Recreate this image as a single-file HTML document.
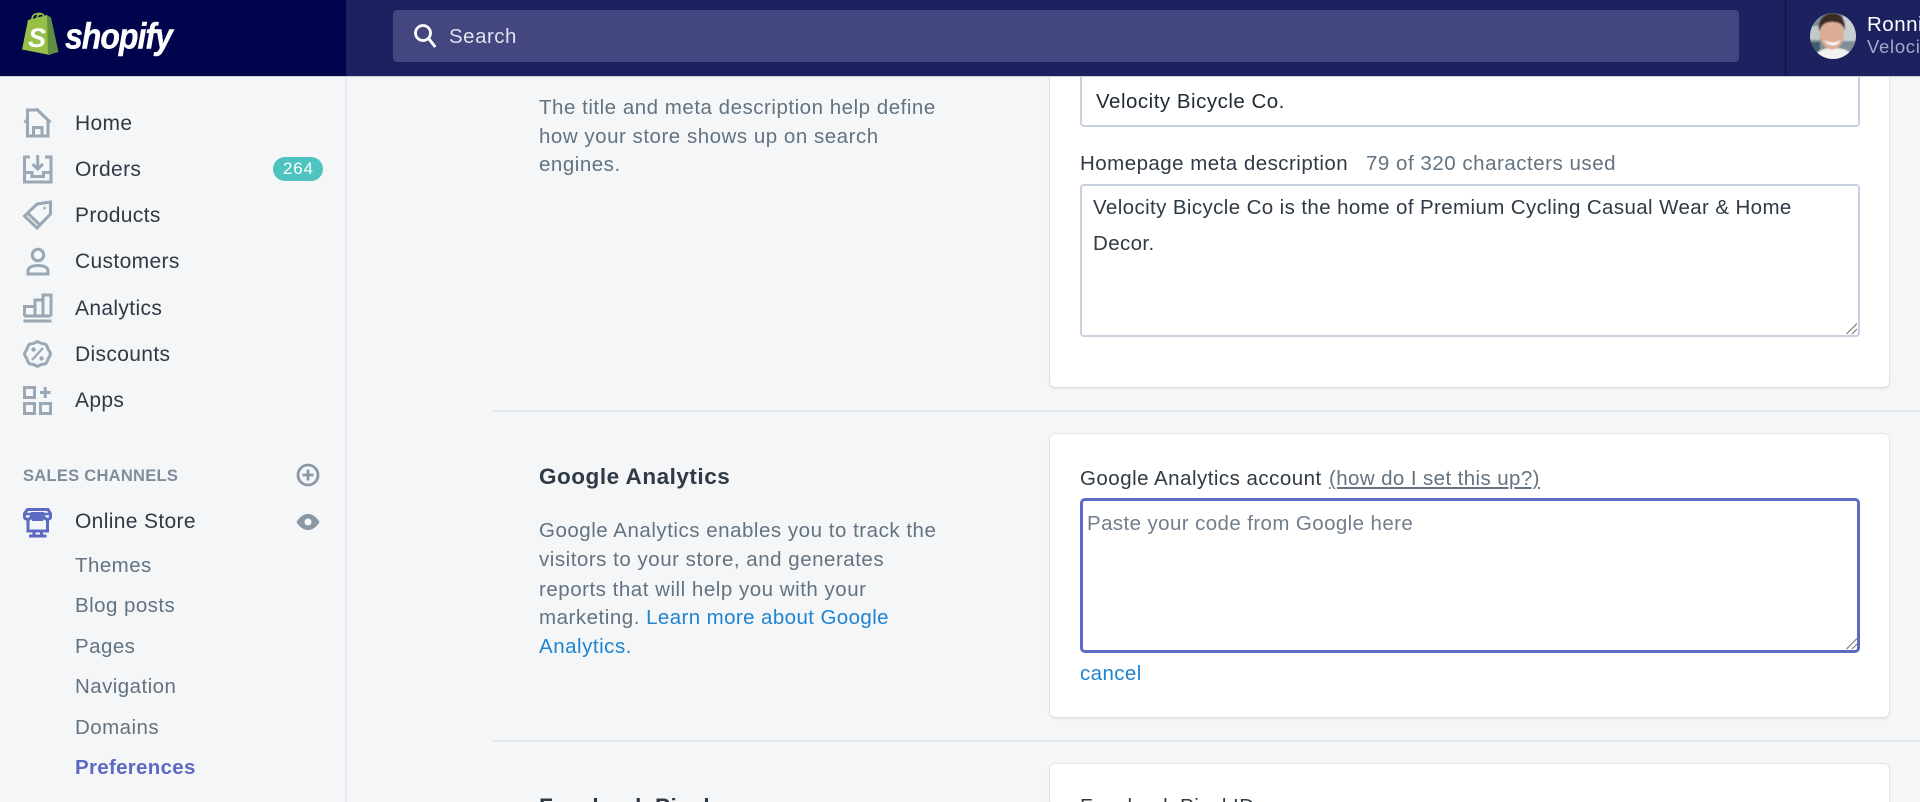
<!DOCTYPE html>
<html lang="en">
<head>
<meta charset="utf-8">
<title>Shopify Preferences</title>
<style>
html,body{margin:0;padding:0;width:1920px;height:802px;overflow:hidden;background:#f4f6f8}
body{font-family:"Liberation Sans",sans-serif;font-size:20.5px;color:#212b36;-webkit-font-smoothing:antialiased}
#p{position:relative;width:1920px;height:802px;overflow:hidden;background:#f4f6f8}
.a{position:absolute;white-space:nowrap;line-height:28px;margin-top:-13px}
.box{position:absolute;box-sizing:border-box}
.nav{left:75px;font-size:21px;color:#2f3a45;letter-spacing:.35px}
.sub{left:75px;color:#637381;letter-spacing:.45px}
.g{left:539px;color:#637381;letter-spacing:.52px}
.h{left:539px;font-size:22.5px;font-weight:700;color:#2f3a45;letter-spacing:.52px}
.card{background:#fff;left:1050px;width:839px;border-radius:5px;box-shadow:0 0 0 1px rgba(63,63,68,.05),0 1px 3px rgba(63,63,68,.15)}
.field{left:1080px;width:780px;background:#fff;border:2px solid #c8d1e0;border-radius:4px}
a{color:#1f84d0;text-decoration:none}
svg{position:absolute;left:0;top:0}
#top{position:absolute;left:0;top:0;width:1920px;height:77px;background:#1c2260;border-bottom:1px solid #c9cbdc;box-sizing:border-box;overflow:hidden}
</style>
</head>
<body>
<div id="p">
<div class="box" style="left:345px;top:77px;width:2px;height:725px;background:#e8ebef"></div>

<div class="a nav" style="top:123px">Home</div>
<div class="a nav" style="top:169px">Orders</div>
<div class="a nav" style="top:215px">Products</div>
<div class="a nav" style="top:261px">Customers</div>
<div class="a nav" style="top:308px">Analytics</div>
<div class="a nav" style="top:354px">Discounts</div>
<div class="a nav" style="top:400px">Apps</div>
<div class="a" style="left:23px;top:475px;font-size:16.5px;font-weight:700;color:#7f8d9b;letter-spacing:.28px">SALES CHANNELS</div>
<div class="a nav" style="top:521px">Online Store</div>
<div class="a sub" style="top:565px">Themes</div>
<div class="a sub" style="top:605px">Blog posts</div>
<div class="a sub" style="top:646px">Pages</div>
<div class="a sub" style="top:686px">Navigation</div>
<div class="a sub" style="top:727px">Domains</div>
<div class="a sub" style="top:767px;color:#5c6ac4;font-weight:700;letter-spacing:.3px">Preferences</div>

<div class="box" style="left:273px;top:157px;width:50px;height:24px;border-radius:12px;background:#4fc3c0"></div>
<div class="a" style="left:283px;top:168px;font-size:17px;color:#fff;letter-spacing:.8px">264</div>

<div class="box" style="left:493px;top:410px;width:1427px;height:2px;background:#e3e7eb"></div>
<div class="box" style="left:493px;top:740px;width:1427px;height:2px;background:#e3e7eb"></div>

<div class="box card" style="top:60px;height:327px"></div>
<div class="box card" style="top:434px;height:283px"></div>
<div class="box card" style="top:764px;height:38px;border-radius:5px 5px 0 0"></div>

<div class="box field" style="top:60px;height:67px"></div>
<div class="box field" style="top:184px;height:153px"></div>
<div class="box field" style="top:498px;height:155px;border:3px solid #5c6ac4;border-radius:5px"></div>

<div class="a g" style="top:107px">The title and meta description help define</div>
<div class="a g" style="top:136px">how your store shows up on search</div>
<div class="a g" style="top:164px">engines.</div>
<div class="a h" style="top:476px">Google Analytics</div>
<div class="a g" style="top:530px">Google Analytics enables you to track the</div>
<div class="a g" style="top:559px">visitors to your store, and generates</div>
<div class="a g" style="top:589px">reports that will help you with your</div>
<div class="a g" style="top:617px">marketing. <a href="#" style="letter-spacing:.4px">Learn more about Google</a></div>
<div class="a g" style="top:646px"><a href="#">Analytics.</a></div>
<div class="box" style="left:530px;top:785px;width:300px;height:17px;overflow:hidden"><div class="a h" style="left:9px;top:21px">Facebook Pixel</div></div>

<div class="a" style="left:1096px;top:101px;color:#212b36;letter-spacing:.5px">Velocity Bicycle Co.</div>
<div class="a" style="left:1080px;top:163px;color:#2f3a45;letter-spacing:.47px">Homepage meta description</div>
<div class="a" style="left:1366px;top:163px;color:#637381;letter-spacing:.52px">79 of 320 characters used</div>
<div class="a" style="left:1093px;top:207px;color:#2f3a45;letter-spacing:.39px">Velocity Bicycle Co is the home of Premium Cycling Casual Wear &amp; Home</div>
<div class="a" style="left:1093px;top:243px;color:#2f3a45;letter-spacing:.39px">Decor.</div>
<div class="a" style="left:1080px;top:478px;color:#2f3a45;letter-spacing:.48px">Google Analytics account</div>
<div class="a" style="left:1329px;top:478px;color:#637381;letter-spacing:.4px;text-decoration:underline">(how do I set this up?)</div>
<div class="a" style="left:1087px;top:523px;color:#717e8c;letter-spacing:.4px">Paste your code from Google here</div>
<div class="a" style="left:1080px;top:673px;letter-spacing:.4px"><a href="#">cancel</a></div>
<div class="box" style="left:1070px;top:785px;width:300px;height:17px;overflow:hidden"><div class="a" style="left:10px;top:21px;color:#2f3a45;letter-spacing:.48px">Facebook Pixel ID</div></div>

<svg width="1920" height="802" viewBox="0 0 1920 802" fill="none">
  <g stroke="#9aa8b5" stroke-width="3" stroke-linejoin="miter">
    <path d="M24.500 122.500 L27.500 119.500 V110 H35.500 L37 109.500 L50.500 122.500"/>
    <path d="M27.500 120 V136 H48 V119"/>
    <path d="M33.500 136 V127.500 H42 V136"/>
    <path d="M30 157 H24.500 V182 H51 V157 H45"/>
    <path d="M24.500 172.500 H32 V176.500 H43.500 V172.500 H51"/>
    <path d="M37.700 155 V169 M32.500 164 L37.700 169 L43 164"/>
    <path d="M37 204 L50.500 202 L50.500 214 L37 228 L24.500 216 Z"/>
    <path d="M27.500 213 L40 225"/>
    <circle cx="38" cy="255" r="5.700"/>
    <path d="M28 274 V271 C28 267 33 265.500 38 265.500 C43 265.500 48 267 48 271 V274 Z"/>
    <path d="M24.500 316 V306.500 H35 V316 M35 316 V300 H43 M43 316 V295 H51 V316 M24 316 H51"/>
    <path d="M23.500 321 H51.500"/>
    <path stroke-linejoin="round" d="M37.500 341.500 C40 343 42 344 45 344 C47 345 47.500 347 48 349 C49 351 50.500 352.500 50.500 354 C50.500 355.500 49 357 48 359 C47.500 361 47 363 45 364 C42 364 40 365 37.500 366.500 C35 365 33 364 30 364 C28 363 27.500 361 27 359 C26 357 24.500 355.500 24.500 354 C24.500 352.500 26 351 27 349 C27.500 347 28 345 30 344 C33 344 35 343 37.500 341.500 Z"/>
    <path d="M32 360 L43 348" stroke-width="2.400"/>
    <rect x="24.500" y="387.500" width="10" height="10"/>
    <rect x="24.500" y="403.500" width="10" height="10"/>
    <rect x="40.500" y="403.500" width="10" height="10"/>
    <path d="M40 392.500 H50.500 M45.200 387 V398"/>
  </g>
  <circle cx="33.500" cy="349.500" r="2.200" fill="#9aa8b5"/>
  <circle cx="41.500" cy="358.500" r="2.200" fill="#9aa8b5"/>
  <circle cx="44.500" cy="208" r="1.300" fill="#9aa8b5"/>
  <circle cx="308" cy="475" r="10" stroke="#8a98a6" stroke-width="2.800"/>
  <path d="M302.500 475 H313.500 M308 469.500 V480.500" stroke="#8a98a6" stroke-width="2.800"/>
  <path d="M296.500 522 C301 515 305 514 308 514 C311 514 315 515 319.500 522 C315 529 311 530 308 530 C305 530 301 529 296.500 522 Z" fill="#8a98a6"/>
  <circle cx="308" cy="522" r="3.500" fill="#f4f6f8"/>
  <g stroke="#5c6ac4" stroke-width="3">
    <path d="M27.500 509.500 H48 L50.500 513.500 V517 C50.500 520 45 520 44 517 C43 520 32 520 31 517 C30 520 24.500 520 24.500 517 V513.500 Z"/>
    <path d="M28 519 V531 H47.500 V519"/>
    <path d="M34 531 V535.500 M41.500 531 V535.500 M29 536 H46.500"/>
    <path d="M24.500 514 H50.500" stroke-width="2.400"/>
  </g>
  <path d="M31 512 H44 L43 521 H32 Z" fill="#5c6ac4"/>
  <g stroke="#7c7c7c" stroke-width="1.200">
    <path d="M1846.500 334 L1857 323.500 M1852 334 L1857 329"/>
    <path d="M1846.500 649 L1857 638.500 M1852 649 L1857 644"/>
  </g>
</svg>

<div id="top">
  <div class="box" style="left:0;top:0;width:346px;height:76px;background:#00044c"></div>
  <div class="box" style="left:393px;top:10px;width:1346px;height:52px;background:#43467f;border-radius:4px"></div>
  <div class="box" style="left:1785px;top:0;width:1px;height:76px;background:#0e1347"></div>
  <div class="a" style="left:65px;top:36px;font-size:32px;line-height:40px;margin-top:-20px;font-weight:700;font-style:italic;color:#fff;letter-spacing:-1px;transform:scaleY(1.12);-webkit-text-stroke:.4px #fff">shopify</div>
  <div class="a" style="left:449px;top:36px;color:#e0e1ee;letter-spacing:.5px">Search</div>
  <div class="a" style="left:1867px;top:24px;color:#fff;letter-spacing:.5px">Ronnie Smith</div>
  <div class="a" style="left:1867px;top:46px;color:#a6a8c8;font-size:18.5px;letter-spacing:.7px">Velocity Bicycle Co.</div>
  <svg width="1920" height="76" viewBox="0 0 1920 76" fill="none">
    <defs>
      <clipPath id="av"><circle cx="1833" cy="36" r="23"/></clipPath>
      <filter id="bl"><feGaussianBlur stdDeviation=".7"/></filter>
    </defs>
    <path d="M28 20 L47 15 L50 55 L22 49.500 Z" fill="#95bf47"/>
    <path d="M47 15 L51 17.500 L58.500 52 L48 55 Z" fill="#5e8e3e"/>
    <path d="M32 20 C32 14 36 13.500 39 13.500 C43 13.500 45 16 45.500 21 M37 19 C37 15 39 14 41 14" stroke="#95bf47" stroke-width="1.700"/>
    <text x="28" y="47" font-family="Liberation Sans" font-size="27" font-weight="700" font-style="italic" fill="#fff">S</text>
    <circle cx="423" cy="33" r="7.500" stroke="#fff" stroke-width="2.800"/>
    <path d="M429 39 L434.500 46" stroke="#fff" stroke-width="3" stroke-linecap="round"/>
    <g clip-path="url(#av)">
      <g filter="url(#bl)">
        <rect x="1808" y="11" width="50" height="50" fill="#7f8f96"/>
        <rect x="1843" y="11" width="15" height="30" fill="#c9d0d2"/>
        <rect x="1808" y="26" width="12" height="14" fill="#c2c9ca"/>
        <rect x="1808" y="42" width="12" height="18" fill="#3f5b6a"/>
        <path d="M1812 62 C1814 51 1824 48 1833 48 C1842 48 1853 50 1856 62 Z" fill="#f2f3f2"/>
        <ellipse cx="1832" cy="34" rx="12" ry="15.500" fill="#dcae96"/>
        <path d="M1819 31 C1817 18 1826 13 1833 13 C1842 13 1846 21 1845 31 C1843 24 1839 22 1832 22 C1826 22 1822 24 1819 31 Z" fill="#3a2a22"/>
        <path d="M1824.500 40 C1829 43.500 1836 43.500 1840.500 40 C1838.500 47 1827 47 1824.500 40 Z" fill="#fff"/>
      </g>
    </g>
  </svg>
</div>
</div>
</body>
</html>
